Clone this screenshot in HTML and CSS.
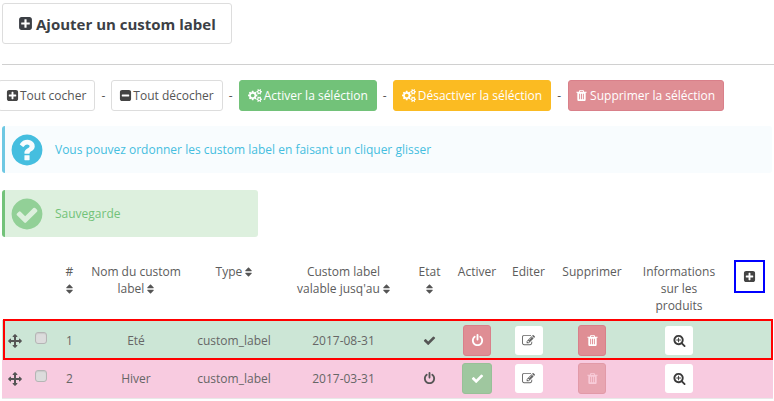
FILE: index.html
```html
<!DOCTYPE html>
<html lang="fr">
<head>
<meta charset="utf-8">
<title>Custom labels</title>
<link rel="stylesheet" href="styles.css">
</head>
<body>
<svg class="sprite" xmlns="http://www.w3.org/2000/svg">
<symbol id="i-plus" viewBox="0 0 1792 1792"><path d="M1408 960v-128q0-26-19-45t-45-19h-320v-320q0-26-19-45t-45-19h-128q-26 0-45 19t-19 45v320h-320q-26 0-45 19t-19 45v128q0 26 19 45t45 19h320v320q0 26 19 45t45 19h128q26 0 45-19t19-45v-320h320q26 0 45-19t19-45zm256-544v960q0 119-84.5 203.5t-203.5 84.5h-960q-119 0-203.5-84.5t-84.5-203.5v-960q0-119 84.5-203.5t203.5-84.5h960q119 0 203.5 84.5t84.5 203.5z"/></symbol>
<symbol id="i-minus" viewBox="0 0 1792 1792"><path d="M1408 960v-128q0-26-19-45t-45-19h-896q-26 0-45 19t-19 45v128q0 26 19 45t45 19h896q26 0 45-19t19-45zm256-544v960q0 119-84.5 203.5t-203.5 84.5h-960q-119 0-203.5-84.5t-84.5-203.5v-960q0-119 84.5-203.5t203.5-84.5h960q119 0 203.5 84.5t84.5 203.5z"/></symbol>
<symbol id="i-cogs" viewBox="0 0 1920 1792"><path d="M896 896q0-106-75-181t-181-75-181 75-75 181 75 181 181 75 181-75 75-181zm768 512q0-52-38-90t-90-38-90 38-38 90q0 53 37.5 90.5t90.5 37.5 90.5-37.5 37.5-90.5zm0-1024q0-52-38-90t-90-38-90 38-38 90q0 53 37.5 90.5t90.5 37.5 90.5-37.5 37.5-90.5zm-384 421v185q0 10-7 19.5t-16 10.5l-155 24q-11 35-32 76 34 48 90 115 7 11 7 20 0 12-7 19-23 30-82.5 89.5t-78.5 59.5q-11 0-21-7l-115-90q-37 19-77 31-11 108-23 155-7 24-30 24h-186q-11 0-20-7.5t-10-17.5l-23-153q-34-10-75-31l-118 89q-7 7-20 7-11 0-21-8-144-133-144-160 0-9 7-19 10-14 41-53t47-61q-23-44-35-82l-152-24q-10-1-17-9.5t-7-19.5v-185q0-10 7-19.5t16-10.5l155-24q11-35 32-76-34-48-90-115-7-11-7-20 0-12 7-20 22-30 82-89t79-59q11 0 21 7l115 90q34-18 77-32 11-108 23-154 7-24 30-24h186q11 0 20 7.5t10 17.5l23 153q34 10 75 31l118-89q8-7 20-7 11 0 21 8 144 133 144 160 0 8-7 19-12 16-42 54t-45 60q23 48 34 82l152 23q10 2 17 10.5t7 19.5zm640 533v140q0 16-149 31-12 27-30 52 51 113 51 138 0 4-4 7-122 71-124 71-8 0-46-47t-52-68q-20 2-30 2t-30-2q-14 21-52 68t-46 47q-2 0-124-71-4-3-4-7 0-25 51-138-18-25-30-52-149-15-149-31v-140q0-16 149-31 13-29 30-52-51-113-51-138 0-4 4-7 4-2 35-20t59-34 30-16q8 0 46 46.5t52 67.5q20-2 30-2t30 2q51-71 92-112l6-2q4 0 124 70 4 3 4 7 0 25-51 138 17 23 30 52 149 15 149 31zm0-1024v140q0 16-149 31-12 27-30 52 51 113 51 138 0 4-4 7-122 71-124 71-8 0-46-47t-52-68q-20 2-30 2t-30-2q-14 21-52 68t-46 47q-2 0-124-71-4-3-4-7 0-25 51-138-18-25-30-52-149-15-149-31v-140q0-16 149-31 13-29 30-52-51-113-51-138 0-4 4-7 4-2 35-20t59-34 30-16q8 0 46 46.5t52 67.5q20-2 30-2t30 2q51-71 92-112l6-2q4 0 124 70 4 3 4 7 0 25-51 138 17 23 30 52 149 15 149 31z"/></symbol>
<symbol id="i-trash" viewBox="0 0 1792 1792"><path d="M704 1376v-704q0-14-9-23t-23-9h-64q-14 0-23 9t-9 23v704q0 14 9 23t23 9h64q14 0 23-9t9-23zm256 0v-704q0-14-9-23t-23-9h-64q-14 0-23 9t-9 23v704q0 14 9 23t23 9h64q14 0 23-9t9-23zm256 0v-704q0-14-9-23t-23-9h-64q-14 0-23 9t-9 23v704q0 14 9 23t23 9h64q14 0 23-9t9-23zm-544-992h448l-48-117q-7-9-17-11h-317q-10 2-17 11zm928 32v64q0 14-9 23t-23 9h-96v948q0 83-47 143.5t-113 60.5h-832q-66 0-113-58.5t-47-141.5v-952h-96q-14 0-23-9t-9-23v-64q0-14 9-23t23-9h309l70-167q15-37 54-63t79-26h320q40 0 79 26t54 63l70 167h309q14 0 23 9t9 23z"/></symbol>
<symbol id="i-question" viewBox="0 0 1792 1792"><path d="M1024 1376v-192q0-14-9-23t-23-9h-192q-14 0-23 9t-9 23v192q0 14 9 23t23 9h192q14 0 23-9t9-23zm256-672q0-88-55.5-163t-138.5-116-170-41q-243 0-371 213-15 24 8 42l132 100q7 6 19 6 16 0 25-12 53-68 86-92 34-24 86-24 48 0 85.5 26t37.5 59q0 38-20 61t-68 45q-63 28-115.5 86.5t-52.5 125.5v36q0 14 9 23t23 9h192q14 0 23-9t9-23q0-19 21.5-49.5t54.5-49.5q32-18 49-28.5t46-35 44.5-48 28-60.5 12.5-81zm384 192q0 209-103 385.5t-279.5 279.5-385.5 103-385.5-103-279.5-279.5-103-385.5 103-385.5 279.5-279.5 385.5-103 385.5 103 279.5 279.5 103 385.5z"/></symbol>
<symbol id="i-ok" viewBox="0 0 1792 1792"><path d="M1412 734q0-28-18-46l-91-90q-19-19-45-19t-45 19l-408 407-226-226q-19-19-45-19t-45 19l-91 90q-18 18-18 46 0 27 18 45l362 362q19 19 45 19 27 0 46-19l543-543q18-18 18-45zm252 162q0 209-103 385.5t-279.5 279.5-385.5 103-385.5-103-279.5-279.5-103-385.5 103-385.5 279.5-279.5 385.5-103 385.5 103 279.5 279.5 103 385.5z"/></symbol>
<symbol id="i-sort" viewBox="352 160 1088 1472"><path d="M1408 1088q0 26-19 45l-448 448q-19 19-45 19t-45-19l-448-448q-19-19-19-45t19-45 45-19h896q26 0 45 19t19 45zm0-384q0 26-19 45t-45 19h-896q-26 0-45-19t-19-45 19-45l448-448q19-19 45-19t45 19l448 448q19 19 19 45z"/></symbol>
<symbol id="i-arrows" viewBox="0 0 1792 1792"><path d="M1792 896q0 26-19 45l-256 256q-19 19-45 19t-45-19-19-45v-128h-384v384h128q26 0 45 19t19 45-19 45l-256 256q-19 19-45 19t-45-19l-256-256q-19-19-19-45t19-45 45-19h128v-384h-384v128q0 26-19 45t-45 19-45-19l-256-256q-19-19-19-45t19-45l256-256q19-19 45-19t45 19 19 45v128h384v-384h-128q-26 0-45-19t-19-45 19-45l256-256q19-19 45-19t45 19l256 256q19 19 19 45t-19 45-45 19h-128v384h384v-128q0-26 19-45t45-19 45 19l256 256q19 19 19 45z"/></symbol>
<symbol id="i-check" viewBox="0 0 1792 1792"><path d="M1671 566q0 40-28 68l-724 724-136 136q-28 28-68 28t-68-28l-136-136-362-362q-28-28-28-68t28-68l136-136q28-28 68-28t68 28l294 295 656-657q28-28 68-28t68 28l136 136q28 28 28 68z"/></symbol>
<symbol id="i-power" viewBox="0 0 1792 1792"><path d="M1664 896q0 156-61 298t-164 245-245 164-298 61-298-61-245-164-164-245-61-298q0-182 80.5-343t226.5-270q43-32 95.5-25t83.5 50q32 42 24.5 94.5t-49.5 84.5q-98 74-151.5 181t-53.5 228q0 104 40.5 198.5t109.5 163.5 163.5 109.5 198.5 40.5 198.5-40.5 163.5-109.5 109.5-163.5 40.5-198.5q0-121-53.5-228t-151.5-181q-42-32-49.5-84.5t24.5-94.5q31-43 84-50t95 25q146 109 226.5 270t80.5 343zm-640-768v640q0 52-38 90t-90 38-90-38-38-90v-640q0-52 38-90t90-38 90 38 38 90z"/></symbol>
<symbol id="i-edit" viewBox="0 0 1792 1792"><path d="M888 1184l116-116-152-152-116 116v56h96v96h56zm440-720q-16-16-33 1l-350 350q-17 17-1 33t33-1l350-350q17-17 1-33zm80 594v190q0 119-84.5 203.5t-203.5 84.5h-832q-119 0-203.5-84.5t-84.5-203.5v-832q0-119 84.5-203.5t203.5-84.5h832q63 0 117 25 15 7 18 23 3 17-9 29l-49 49q-14 14-32 8-23-6-45-6h-832q-66 0-113 47t-47 113v832q0 66 47 113t113 47h832q66 0 113-47t47-113v-126q0-13 9-22l64-64q15-15 35-8t20 29zm-96-738l288 288-672 672h-288v-288zm444 132l-92 92-288-288 92-92q28-28 68-28t68 28l152 152q28 28 28 68t-28 68z"/></symbol>
<symbol id="i-zoom" viewBox="0 0 1792 1792"><path d="M1088 800v64q0 13-9.5 22.5t-22.5 9.5h-224v224q0 13-9.5 22.5t-22.5 9.5h-64q-13 0-22.5-9.5t-9.5-22.5v-224h-224q-13 0-22.5-9.5t-9.5-22.5v-64q0-13 9.5-22.5t22.5-9.5h224v-224q0-13 9.5-22.5t22.5-9.5h64q13 0 22.5 9.5t9.5 22.5v224h224q13 0 22.5 9.5t9.5 22.5zm128 32q0-185-131.5-316.5t-316.5-131.5-316.5 131.5-131.5 316.5 131.5 316.5 316.5 131.5 316.5-131.5 131.5-316.5zm512 832q0 53-37.5 90.5t-90.5 37.5q-54 0-90-38l-343-342q-179 124-399 124-143 0-273.5-55.5t-225-150-150-225-55.5-273.5 55.5-273.5 150-225 225-150 273.5-55.5 273.5 55.5 225 150 150 225 55.5 273.5q0 220-124 399l343 343q37 37 37 90z"/></symbol>
</svg>

<a class="btn btn-add"><svg class="ico ico-add"><use href="#i-plus"/></svg>Ajouter un custom label</a>
<hr class="rule">

<div class="toolbar">
  <a class="btn btn-tool btn-plain"><svg class="ico"><use href="#i-plus"/></svg>Tout cocher</a>
  <span class="sep">-</span>
  <a class="btn btn-tool btn-plain"><svg class="ico"><use href="#i-minus"/></svg>Tout décocher</a>
  <span class="sep">-</span>
  <a class="btn btn-tool btn-green"><svg class="ico ico-cogs"><use href="#i-cogs"/></svg>Activer la séléction</a>
  <span class="sep">-</span>
  <a class="btn btn-tool btn-yellow"><svg class="ico ico-cogs"><use href="#i-cogs"/></svg>Désactiver la séléction</a>
  <span class="sep">-</span>
  <a class="btn btn-tool btn-red"><svg class="ico"><use href="#i-trash"/></svg>Supprimer la séléction</a>
</div>

<div class="alert alert-info"><svg class="alert-ico"><use href="#i-question"/></svg><span>Vous pouvez ordonner les custom label en faisant un cliquer glisser</span></div>
<div class="alert alert-success"><svg class="alert-ico"><use href="#i-ok"/></svg><span>Sauvegarde</span></div>

<table class="grid">
  <colgroup>
    <col class="c1"><col class="c2"><col class="c3"><col class="c4"><col class="c5"><col class="c6"><col class="c7"><col class="c8"><col class="c9"><col class="c10"><col class="c11"><col class="c12">
  </colgroup>
  <thead>
    <tr>
      <th></th>
      <th></th>
      <th class="th-num"># <svg class="sort"><use href="#i-sort"/></svg></th>
      <th>Nom du custom label <svg class="sort"><use href="#i-sort"/></svg></th>
      <th>Type <svg class="sort"><use href="#i-sort"/></svg></th>
      <th class="th-date">Custom label valable jusq'au <svg class="sort"><use href="#i-sort"/></svg></th>
      <th class="th-state">Etat <svg class="sort"><use href="#i-sort"/></svg></th>
      <th>Activer</th>
      <th>Editer</th>
      <th>Supprimer</th>
      <th class="th-info">Informations sur les produits</th>
      <th><a class="add-col"><svg class="ico ico-col"><use href="#i-plus"/></svg></a></th>
    </tr>
  </thead>
  <tbody>
    <tr class="row row-on">
      <td class="cell-first"><svg class="drag"><use href="#i-arrows"/></svg></td>
      <td><span class="check"></span></td>
      <td>1</td>
      <td>Eté</td>
      <td>custom_label</td>
      <td>2017-08-31</td>
      <td><svg class="state"><use href="#i-check"/></svg></td>
      <td><a class="act act-red"><svg><use href="#i-power"/></svg></a></td>
      <td><a class="act act-white"><svg><use href="#i-edit"/></svg></a></td>
      <td><a class="act act-red"><svg><use href="#i-trash"/></svg></a></td>
      <td><a class="act act-white act-zoom"><svg><use href="#i-zoom"/></svg></a></td>
      <td></td>
    </tr>
    <tr class="row row-off">
      <td><svg class="drag"><use href="#i-arrows"/></svg></td>
      <td><span class="check"></span></td>
      <td>2</td>
      <td>Hiver</td>
      <td>custom_label</td>
      <td>2017-03-31</td>
      <td><svg class="state"><use href="#i-power"/></svg></td>
      <td><a class="act act-green"><svg><use href="#i-check"/></svg></a></td>
      <td><a class="act act-white"><svg><use href="#i-edit"/></svg></a></td>
      <td><a class="act act-red act-dim"><svg><use href="#i-trash"/></svg></a></td>
      <td><a class="act act-white act-zoom"><svg><use href="#i-zoom"/></svg></a></td>
      <td></td>
    </tr>
  </tbody>
</table>
</body>
</html>
```

FILE: styles.css
```css
* { box-sizing: border-box; }

html, body { overflow: hidden; }

body {
  margin: 0;
  padding: 3px 0 0 2px;
  height: 401px;
  background: #fff;
  font-family: "Open Sans", "DejaVu Sans", sans-serif;
  font-size: 12px;
  color: #555;
}

.sprite { display: none; }

.ico {
  width: 13px;
  height: 13px;
  fill: currentColor;
  margin-right: 2px;
  flex: none;
}

.ico-cogs { width: 14px; }

.btn {
  display: inline-flex;
  align-items: center;
  border: 1px solid #ddd;
  border-radius: 3px;
  background: #fff;
}

.btn-add {
  height: 41px;
  width: 230px;
  padding-left: 15px;
  font-size: 15px;
  font-weight: 700;
  color: #3c3f45;
}

.ico-add {
  width: 15px;
  height: 15px;
  margin-right: 3px;
}

.rule {
  margin: 20px 0 15px;
  border: 0;
  border-top: 1px solid #d0d0d0;
}

.toolbar {
  display: flex;
  align-items: center;
  margin-left: -4px;
  height: 31px;
}

.btn-tool {
  height: 31px;
  padding: 0 8px 0 7px;
  color: #555;
}

.btn-plain .ico { margin-right: 1px; color: #444; }

.sep {
  width: 16px;
  text-align: center;
}

.btn-green,
.btn-yellow { padding-left: 8px; }

.btn-green { background: #72c279; border-color: #72c279; color: #fff; }
.btn-yellow { background: #fbbb22; border-color: #fbbb22; color: #fff; }
.btn-red {
  margin-left: 1px;
  padding-left: 6px;
  background: #df8e94;
  border-color: #d9808a;
  color: #fff;
}

.alert {
  display: flex;
  align-items: center;
  height: 47px;
  border-left: 3px solid;
  border-radius: 3px;
  padding-left: 4px;
}

.alert-ico {
  width: 36px;
  height: 36px;
  fill: currentColor;
  margin-right: 10px;
  flex: none;
}

.alert-info {
  margin-top: 15px;
  width: 770px;
  background: #f8fcfe;
  border-color: #6ec8e3;
  color: #45bedf;
}

.alert-success {
  margin-top: 17px;
  width: 256px;
  background: #ddf0de;
  border-color: #72c279;
  color: #72c279;
}

.alert-success .alert-ico { color: #92d097; }

.grid {
  margin-top: 18px;
  width: 771px;
  table-layout: fixed;
  border-collapse: collapse;
}

.c1 { width: 26px; }
.c2 { width: 27px; }
.c3 { width: 29px; }
.c4 { width: 104px; }
.c5 { width: 92px; }
.c6 { width: 127px; }
.c7 { width: 45px; }
.c8 { width: 50px; }
.c9 { width: 53px; }
.c10 { width: 74px; }
.c11 { width: 100px; }
.c12 { width: 44px; }

.grid th {
  height: 65px;
  padding: 8px 4px 0;
  vertical-align: top;
  font-weight: 400;
  font-size: 12px;
  line-height: 17px;
  text-align: center;
  color: #5c5c5c;
}

.grid .th-num { padding-left: 7px; padding-right: 7px; }
.grid .th-info { padding-left: 12px; padding-right: 12px; }
.grid .th-date { padding-left: 14px; padding-right: 14px; }
.grid .th-state { padding-left: 7px; padding-right: 7px; }

.sort {
  width: 7px;
  height: 10px;
  fill: #555;
  vertical-align: -1px;
}

.grid td {
  height: 38px;
  padding: 0;
  text-align: center;
  vertical-align: middle;
  font-size: 12px;
  color: #666;
}

.row-on { background: #cce6d6; }
.row-on td { height: 40px; padding-top: 1px; }
.row-off { background: #f8cbe0; }
.row-off td { border-bottom: 1px solid #e8e8e8; }

.cell-first { position: relative; }

.cell-first::after {
  content: "";
  box-sizing: border-box;
  position: absolute;
  left: 1px;
  top: -1px;
  width: 770px;
  height: 41px;
  border: 2px solid #f00;
}

.drag {
  display: block;
  width: 14px;
  height: 14px;
  margin-left: 6px;
  fill: #555;
}

.check {
  display: block;
  width: 12px;
  height: 12px;
  margin: -5px 0 0 7px;
  border: 1px solid #b5b5b5;
  border-radius: 3px;
  background: #dcdcdc;
  box-shadow: inset 0 1px 1px rgba(0, 0, 0, 0.08);
}

.state {
  display: block;
  width: 13px;
  height: 13px;
  margin: 0 auto;
  fill: #555;
}

.act {
  display: inline-flex;
  align-items: center;
  justify-content: center;
  width: 28px;
  height: 31px;
  vertical-align: middle;
  border-radius: 3px;
}

.act svg {
  width: 13px;
  height: 13px;
  fill: currentColor;
}

.act-red { background: #df8e94; border: 1px solid #d9808a; color: #fff; }
.act-dim { background: #e8a5b1; border-color: #e29aa8; color: #f8cbd8; }
.act-green { width: 30px; background: #9fc79f; border: 1px solid #98c098; color: #fff; }
.act-white { height: 29px; background: #fff; color: #666; }
.act-zoom { color: #3a3a3a; }

.add-col {
  display: inline-flex;
  align-items: center;
  justify-content: center;
  width: 31px;
  height: 33px;
  margin: -3px 0 0 -4px;
  border: 2px solid #00f;
}

.ico-col {
  width: 13px;
  height: 13px;
  margin: 0;
  color: #444;
}
```
